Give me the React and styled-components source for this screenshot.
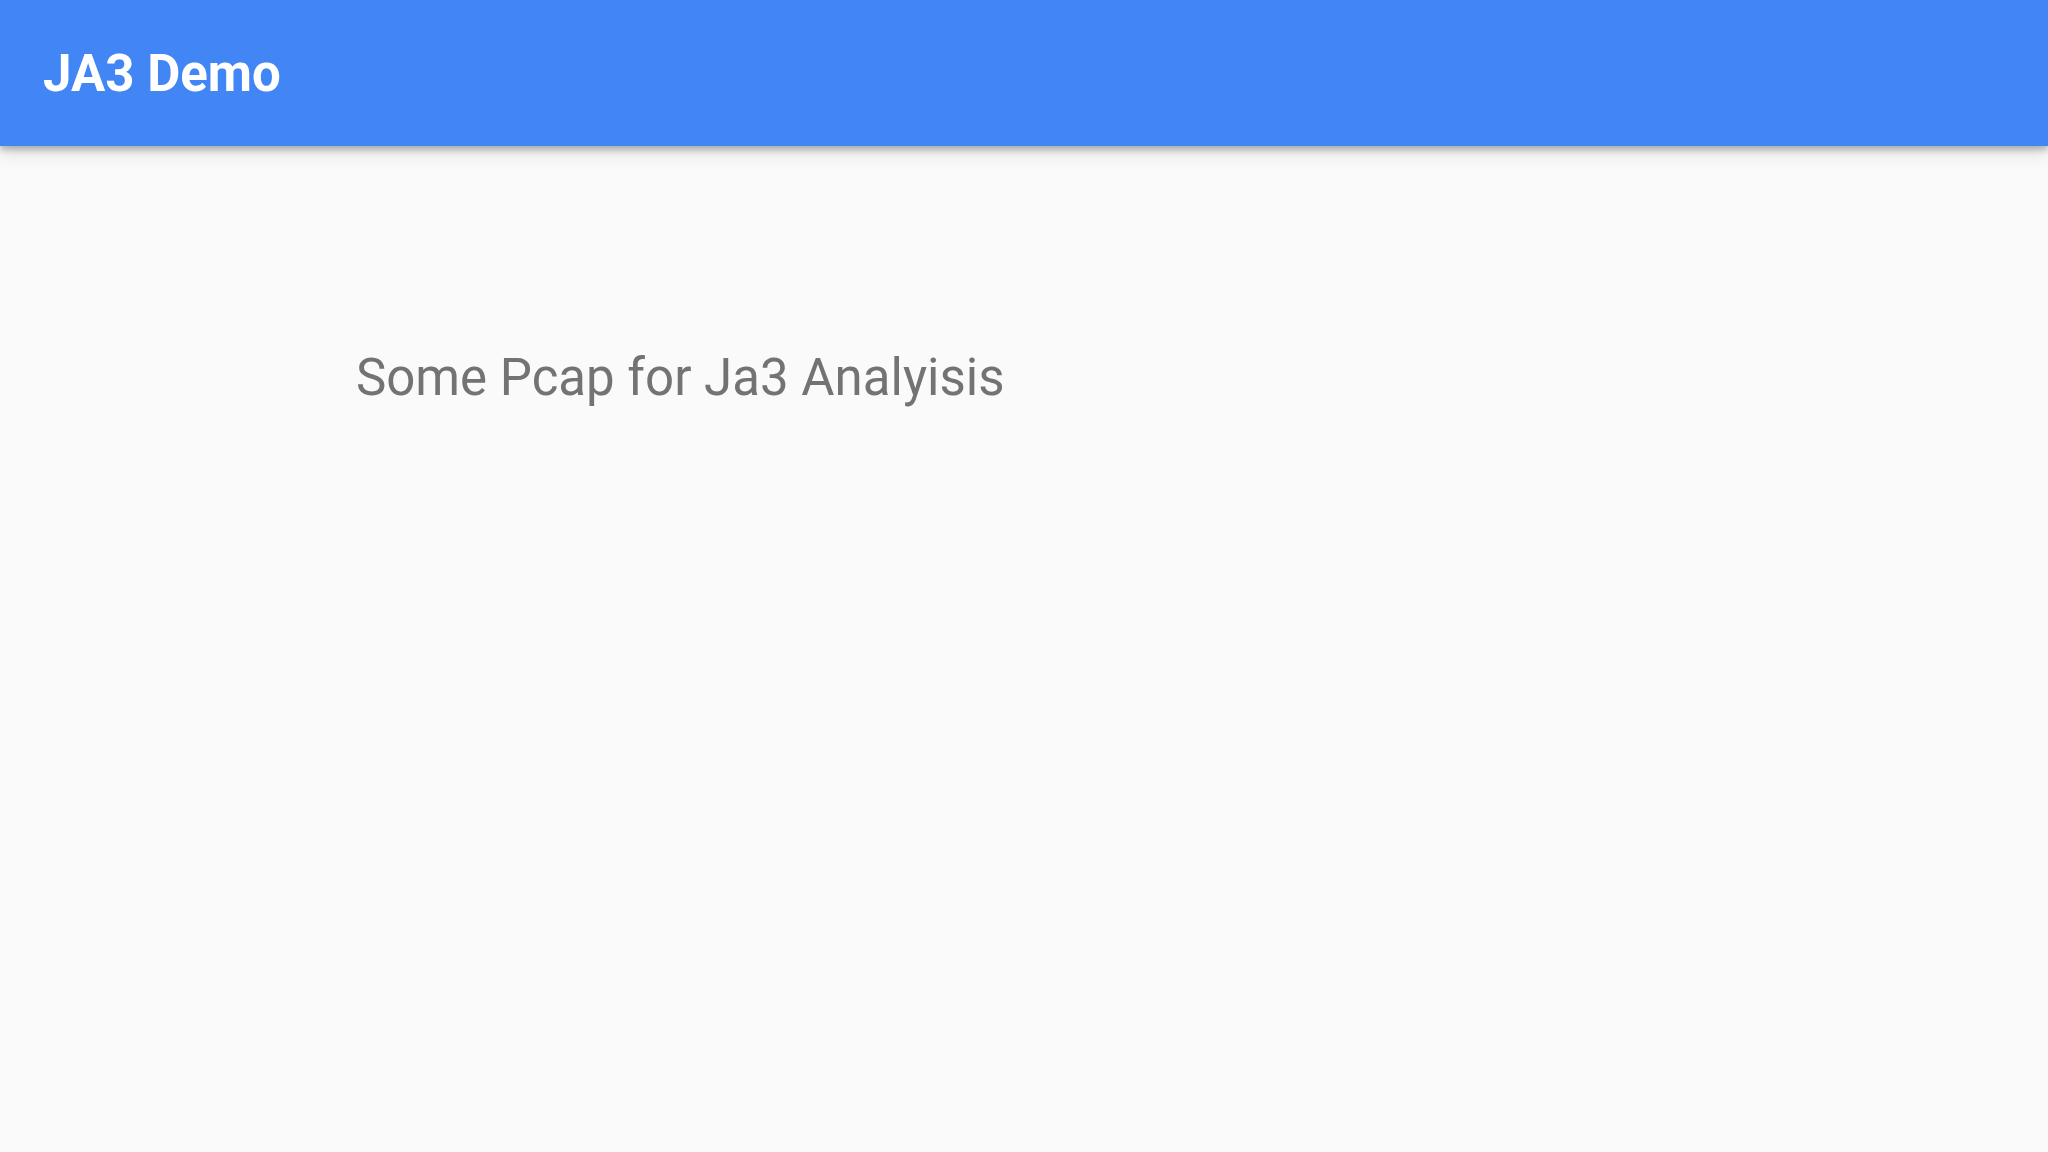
import styled, { createGlobalStyle } from 'styled-components'

const GlobalStyle = createGlobalStyle`
  html, body {
    margin: 0;
    padding: 0;
    background: #fafafa;
    font-family: Roboto, "Liberation Sans", sans-serif;
  }
`

const Page = styled.div`
  min-height: 100vh;
  display: flex;
  flex-direction: column;
  background: #fafafa;
`

const AppBar = styled.header`
  position: relative;
  z-index: 1;
  height: 146px;
  display: flex;
  align-items: center;
  padding: 0 43px;
  background: #4285f4;
  box-shadow: 0 4px 6px rgba(0, 0, 0, 0.24), 0 8px 16px rgba(0, 0, 0, 0.1);
`

const Brand = styled.h1`
  margin: 0;
  font-size: 51px;
  font-weight: 700;
  color: #fff;
`

const Main = styled.main`
  padding: 202px 356px 0;
`

const Heading = styled.h2`
  margin: 0;
  font-size: 51px;
  font-weight: 400;
  color: #737373;
`

export default function App() {
  return (
    <>
      <GlobalStyle />
      <Page>
        <AppBar>
          <Brand>JA3 Demo</Brand>
        </AppBar>
        <Main>
          <Heading>Some Pcap for Ja3 Analyisis</Heading>
        </Main>
      </Page>
    </>
  )
}
